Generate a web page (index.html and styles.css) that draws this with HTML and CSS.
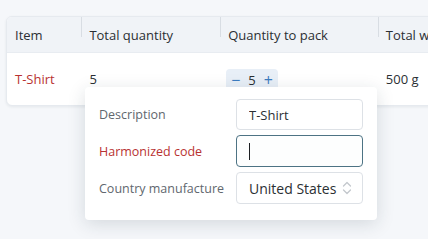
FILE: index.html
```html
<!DOCTYPE html>
<html lang="en">
<head>
  <meta charset="UTF-8">
  <meta name="viewport" content="width=device-width, initial-scale=1.0">
  <title>Pack items</title>
  <link rel="stylesheet" href="styles.css">
</head>
<body>
  <div class="page">
    <div class="table-card">
      <div class="row head">
        <div class="cell col-item">Item</div>
        <div class="cell col-total"><span class="sep"></span>Total quantity</div>
        <div class="cell col-pack"><span class="sep"></span>Quantity to pack</div>
        <div class="cell col-weight"><span class="sep"></span>Total weight</div>
      </div>
      <div class="row body">
        <div class="cell col-item item-name">T-Shirt</div>
        <div class="cell col-total">5</div>
        <div class="cell col-pack">
          <div class="stepper">
            <span class="step">&minus;</span>
            <span class="step-value">5</span>
            <span class="step">+</span>
          </div>
        </div>
        <div class="cell col-weight">500 g</div>
      </div>
    </div>

    <div class="popover">
      <div class="field">
        <label for="description">Description</label>
        <input type="text" id="description" value="T-Shirt">
      </div>
      <div class="field error">
        <label for="hsCode">Harmonized code</label>
        <div class="input focused"><span class="caret"></span></div>
      </div>
      <div class="field">
        <label for="country">Country manufacture</label>
        <div class="select" id="country">
          <span class="select-value">United States</span>
          <svg class="chevrons" width="10" height="16" viewBox="0 0 10 16" fill="none">
            <path d="M1.5 6 5 2.5 8.5 6" stroke="#c4c8cd" stroke-width="1.3" stroke-linecap="round" stroke-linejoin="round"/>
            <path d="M1.5 10 5 13.5 8.5 10" stroke="#c4c8cd" stroke-width="1.3" stroke-linecap="round" stroke-linejoin="round"/>
          </svg>
        </div>
      </div>
    </div>
  </div>
</body>
</html>
```

FILE: styles.css
```css
body {
  margin: 0;
  background: #f5f7fa;
  color: #2b2f33;
  font-family: "Open Sans", "Noto Sans", sans-serif;
  font-size: 13px;
  overflow: hidden;
}

.page {
  position: relative;
  width: 428px;
  height: 239px;
  padding: 16px 0 0 6px;
  box-sizing: border-box;
  overflow: hidden;
}

.table-card {
  width: 460px;
  background: #fff;
  border: 1px solid #e6eaef;
  border-radius: 6px;
  box-shadow: 0 1px 3px rgba(30, 45, 60, 0.08);
  overflow: hidden;
}

.row {
  display: flex;
}

.row.head {
  height: 35px;
  background: #f0f3f7;
  border-bottom: 1px solid #e8ecf1;
  align-items: center;
}

.row.body {
  height: 52px;
  align-items: center;
}

.cell {
  position: relative;
  padding-left: 8px;
  box-sizing: border-box;
  white-space: nowrap;
}

.sep {
  position: absolute;
  left: 0;
  top: -9px;
  width: 1px;
  height: 20px;
  background: #d8dde3;
}

.col-item { width: 75px; }
.col-total { width: 140px; }
.col-pack { width: 159px; }
.col-weight { width: 90px; }

.item-name {
  color: #b83232;
}

.stepper {
  display: inline-flex;
  align-items: center;
  gap: 8px;
  height: 21px;
  padding: 0 5px;
  margin-left: -2px;
  margin-top: 1px;
  background: #e8eff7;
  border-radius: 4px;
}

.step {
  color: #3b7cc0;
  font-size: 16px;
  line-height: 1;
}

.popover {
  position: absolute;
  left: 85px;
  top: 87px;
  width: 292px;
  box-sizing: border-box;
  padding: 12px 14px 16px 14px;
  background: #fff;
  border-radius: 4px;
  box-shadow: 0 4px 18px rgba(30, 45, 60, 0.15);
  display: flex;
  flex-direction: column;
  gap: 5px;
}

.field {
  display: flex;
  align-items: center;
  justify-content: space-between;
}

.field label {
  color: #61676e;
  font-size: 12.5px;
}

.field.error label {
  color: #b83232;
}

.field input,
.input,
.select {
  width: 127px;
  height: 31px;
  box-sizing: border-box;
  padding: 0 12px;
  border: 1px solid #dde1e6;
  border-radius: 4px;
  background: #fff;
  color: #2b2f33;
  font-family: inherit;
  font-size: 13px;
  outline: none;
}

.input {
  display: flex;
  align-items: center;
}

.input.focused {
  height: 32px;
  border-color: #4d7384;
  background: #fdfefe;
}

.caret {
  width: 1px;
  height: 17px;
  background: #1c1f22;
}

.select {
  height: 32px;
  display: flex;
  align-items: center;
  justify-content: space-between;
  padding: 0 10px 0 12px;
  font-size: 14px;
  overflow: hidden;
}

.select-value {
  white-space: nowrap;
}

.chevrons {
  flex: none;
  margin-left: 4px;
}
```
